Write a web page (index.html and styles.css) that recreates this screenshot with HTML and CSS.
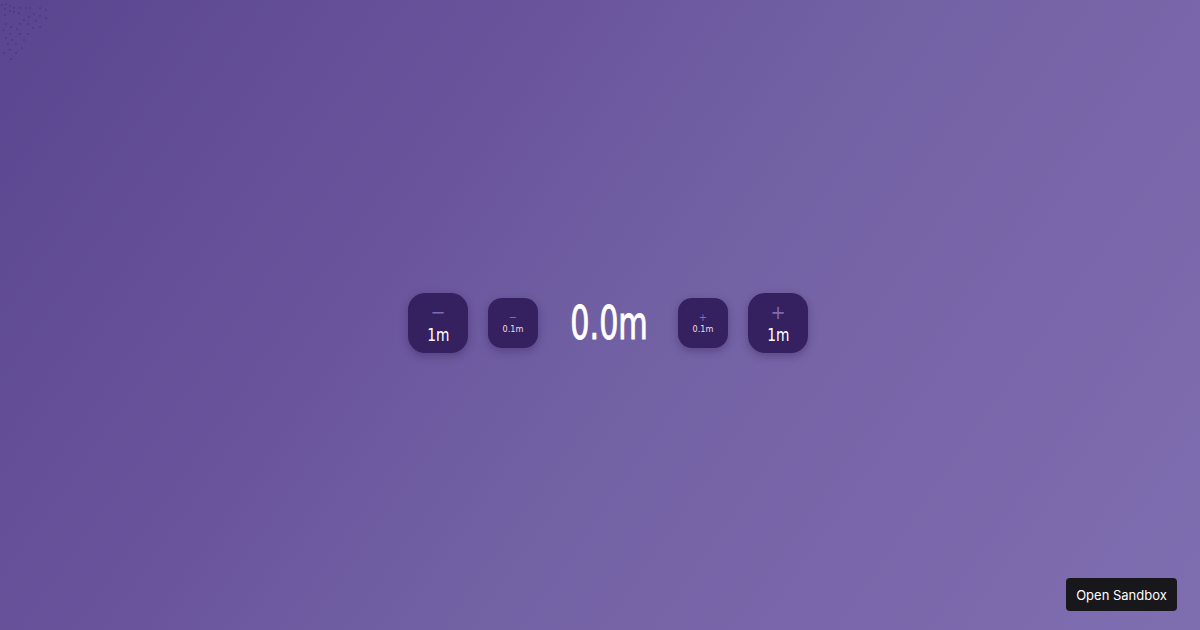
FILE: index.html
```html
<!DOCTYPE html>
<html>
<head>
<meta charset="utf-8">
<link rel="stylesheet" href="styles.css">
</head>
<body>
<svg class="dots" width="50" height="62" viewBox="0 0 50 62">
  <g fill="#3f2d6e">
    <circle cx="2" cy="5" r="0.7"/><circle cx="6" cy="4" r="0.7"/><circle cx="10" cy="6" r="0.7"/>
    <circle cx="5" cy="9" r="0.7"/><circle cx="14" cy="8" r="0.7"/><circle cx="20" cy="8" r="0.7"/>
    <circle cx="26" cy="8" r="0.7"/><circle cx="30" cy="8" r="0.7"/><circle cx="40" cy="8" r="0.7"/>
    <circle cx="10" cy="11" r="0.7"/><circle cx="14" cy="12" r="0.7"/><circle cx="46" cy="10" r="0.7"/>
    <circle cx="5" cy="15" r="0.7"/><circle cx="19" cy="13" r="0.7"/>
    <circle cx="34" cy="14" r="0.7"/><circle cx="29" cy="17" r="0.7"/>
    <circle cx="40" cy="16" r="0.7"/><circle cx="46" cy="18" r="0.7"/>
    <circle cx="24" cy="20" r="0.7"/><circle cx="36" cy="21" r="0.7"/><circle cx="6" cy="24" r="0.7"/>
    <circle cx="20" cy="24" r="0.7"/><circle cx="28" cy="24" r="0.7"/><circle cx="11" cy="27" r="0.7"/>
    <circle cx="17" cy="29" r="0.7"/><circle cx="33" cy="28" r="0.7"/><circle cx="40" cy="27" r="0.7"/>
    <circle cx="4" cy="30" r="0.7"/><circle cx="10" cy="34" r="0.7"/><circle cx="20" cy="34" r="0.7"/>
    <circle cx="28" cy="34" r="0.7"/><circle cx="6" cy="38" r="0.7"/><circle cx="12" cy="40" r="0.7"/>
    <circle cx="24" cy="40" r="0.7"/><circle cx="8" cy="44" r="0.7"/><circle cx="16" cy="44" r="0.7"/>
    <circle cx="22" cy="48" r="0.7"/><circle cx="10" cy="50" r="0.7"/><circle cx="4" cy="53" r="0.7"/>
    <circle cx="16" cy="53" r="0.7"/><circle cx="11" cy="59" r="0.7"/>
  </g>
</svg>
<main class="stage">
  <div class="controls">
    <button class="step big"><span class="sign">−</span><span class="lbl">1m</span></button>
    <button class="step small"><span class="sign">−</span><span class="lbl">0.1m</span></button>
    <div class="value"><span class="num">0.0m</span></div>
    <button class="step small"><span class="sign">+</span><span class="lbl">0.1m</span></button>
    <button class="step big"><span class="sign">+</span><span class="lbl">1m</span></button>
  </div>
</main>
<button class="sandbox">Open Sandbox</button>
</body>
</html>
```
FILE: styles.css
```css
html, body {
  margin: 0;
  padding: 0;
  width: 1200px;
  height: 630px;
  overflow: hidden;
}
body {
  background: linear-gradient(125deg, #5a4690 0%, #6a559d 35%, #7262a4 55%, #7a66aa 75%, #7e6eb0 100%);
  font-family: "DejaVu Sans Condensed", "DejaVu Sans", sans-serif;
  position: relative;
}
.dots {
  position: absolute;
  left: 0;
  top: 0;
}
.stage {
  width: 1200px;
  height: 630px;
  display: flex;
  align-items: center;
  justify-content: center;
}
.controls {
  display: flex;
  align-items: center;
  gap: 20px;
  margin-left: 16px;
  margin-top: 16px;
}
.step {
  border: none;
  background: #35215f;
  color: #fff;
  display: flex;
  flex-direction: column;
  align-items: center;
  justify-content: center;
  padding: 0;
  box-shadow: 0 3px 8px rgba(40, 20, 80, 0.35);
  font-family: "DejaVu Sans Condensed", "DejaVu Sans", sans-serif;
}
.big {
  width: 60px;
  height: 60px;
  border-radius: 17px;
}
.small {
  width: 50px;
  height: 50px;
  border-radius: 14px;
}
.sign {
  color: #7f6bb0;
  line-height: 1;
}
.big .sign {
  font-size: 20px;
  margin-bottom: 5px;
}
.big .lbl {
  font-size: 17px;
  line-height: 1;
  display: inline-block;
  transform: scaleX(0.9);
}
.small .sign {
  font-size: 11px;
  margin-bottom: 2px;
}
.small .lbl {
  font-size: 9px;
  line-height: 1;
  color: #f0dde8;
}
.value {
  color: #fff;
  width: 100px;
  text-align: center;
  line-height: 1;
}
.num {
  display: inline-block;
  font-size: 46px;
  font-weight: normal;
  -webkit-text-stroke: 0.9px #fff;
  transform: translateX(-2px) scaleX(0.73);
}
.sandbox {
  position: absolute;
  right: 23px;
  bottom: 19px;
  width: 111px;
  height: 33px;
  border: none;
  border-radius: 4px;
  background: #18171c;
  color: #fff;
  font-family: Inter, "Liberation Sans", sans-serif;
  font-size: 13px;
  padding: 0;
}
```
